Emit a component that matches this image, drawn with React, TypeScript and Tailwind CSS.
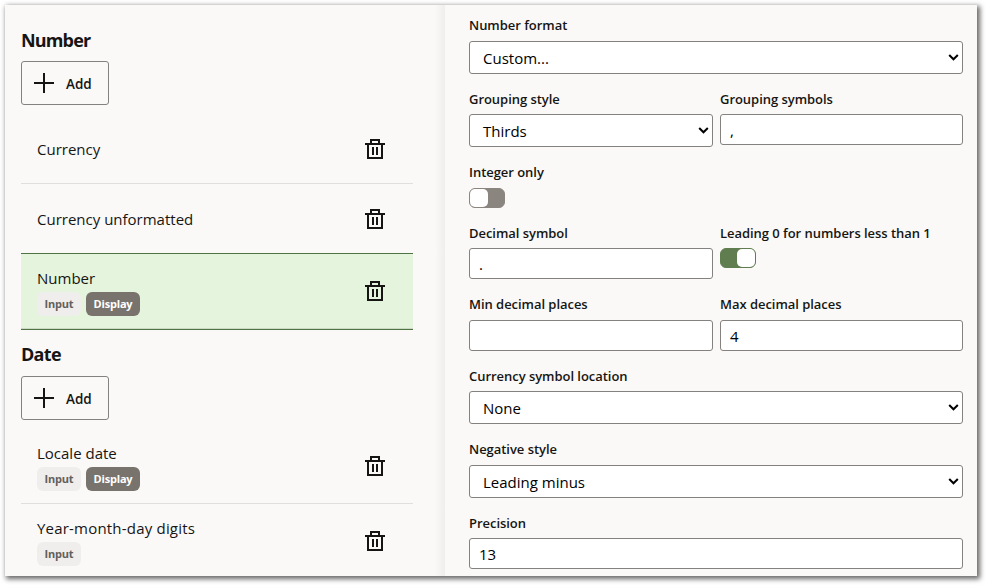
import React from "react";

function TrashIcon() {
  return (
    <svg width="20" height="20" viewBox="0 0 20 20" fill="none" stroke="#161513" strokeWidth="2" shapeRendering="crispEdges">
      <path d="M0 5h20M6 4V1h8v3M3 5v14h14V5M8 8v8M12 8v8" />
    </svg>
  );
}

function AddButton({ className }: { className: string }) {
  return (
    <button className={`flex h-11 w-22 items-center rounded-[3px] border border-[#84817e] pl-3 ${className}`}>
      <svg width="20" height="20" viewBox="0 0 20 20" stroke="#161513" strokeWidth="2" shapeRendering="crispEdges">
        <path d="M0 10h20M10 0v20" />
      </svg>
      <span className="ml-3 mt-0.5 text-[13.5px] leading-5 font-semibold">Add</span>
    </button>
  );
}

function Chip({ display = false }: { display?: boolean }) {
  return display ? (
    <span className="flex h-6 w-[54px] items-center justify-center rounded-md bg-[#79736d] text-[11px] font-bold tracking-[-0.2px] text-white">Display</span>
  ) : (
    <span className="flex h-6 w-11 items-center justify-center rounded-md bg-[#f0eeed] text-[11px] font-bold tracking-[-0.2px] text-[#65605b]">Input</span>
  );
}

function Row({ name, spacing = "", className, chips = 0 }: { name: string; spacing?: string; className: string; chips?: number }) {
  return (
    <div className={`flex items-center pl-4 pr-7 ${className}`}>
      <div className="flex-1">
        <div className={`text-[15px] leading-6 font-normal ${spacing}`}>{name}</div>
        {chips > 0 && (
          <div className="mt-0.5 flex gap-[5px]">
            <Chip />
            {chips > 1 && <Chip display />}
          </div>
        )}
      </div>
      <TrashIcon />
    </div>
  );
}

function Label({ children }: { children: string }) {
  return <label className="block h-5 whitespace-nowrap text-[13px] leading-5 font-semibold tracking-[-0.04px]">{children}</label>;
}

function Select({ value }: { value: string }) {
  return (
    <div className="flex h-[33px] items-center justify-between rounded-[3px] border border-[#84817e] bg-white pl-[13px] pr-[3px] text-[15px] text-black">
      <span className="leading-6 font-normal">{value}</span>
      <svg width="11" height="8" viewBox="0 0 11 8" fill="none" stroke="#000" strokeWidth="2">
        <path d="M1.2 1L5.5 5.3L9.8 1" />
      </svg>
    </div>
  );
}

function Input({ value }: { value: string }) {
  return (
    <div className="flex h-[31px] items-center rounded-[3px] border border-[#84817e] bg-white pl-[9px] text-[15px] text-black">
      <span className="leading-6 font-normal">{value}</span>
    </div>
  );
}

function Toggle({ on = false }: { on?: boolean }) {
  return (
    <div className={`flex h-5 w-9 rounded-md border ${on ? "justify-end border-[#5f7d4f] bg-[#5f7d4f]" : "border-[#8b8580] bg-[#8b8580]"}`}>
      <div className="h-[18px] w-[18px] rounded-[5px] bg-white" />
    </div>
  );
}

export default function App() {
  return (
    <div className="h-[585px] w-[986px] overflow-hidden bg-white pl-[5px] pt-[5px] font-['Open_Sans','Noto_Sans',sans-serif] text-[#161513]">
      <div className="flex h-[571px] w-[972px] bg-[#faf9f7] shadow-[2px_2px_5px_1px_rgba(0,0,0,0.6)]">
        <div className="w-[430px] pl-4">
          <h2 className="pt-[23px] text-[18px] leading-6 font-bold tracking-[-0.85px]">Number</h2>
          <AddButton className="mt-[9px]" />
          <div className="w-[392px] pt-2.5">
            <Row name="Currency" className="h-[69px] border-b border-[#e1dfdd]" />
            <Row name="Currency unformatted" className="h-[69px]" />
            <Row
              name="Number"
              className="h-[77px] border-y border-[#4f7342] bg-[#e4f4dd] pb-px shadow-[inset_0_-1px_0_#cbd9c5]"
              chips={2}
            />
          </div>
          <h2 className="pt-3 text-[18px] leading-6 font-bold tracking-[-0.7px]">Date</h2>
          <AddButton className="mt-2.5" />
          <div className="w-[392px] pt-[9px]">
            <Row name="Locale date" className="h-[75px] border-b border-[#e1dfdd]" chips={2} />
            <Row name="Year-month-day digits" spacing="tracking-[0.2px]" className="h-[74px]" chips={1} />
          </div>
        </div>
        <div className="w-2.5 bg-linear-to-r from-[#faf9f7] to-[#efeeec]" />
        <div className="flex-1 pl-6 pr-3.5 pt-2.5">
          <Label>Number format</Label>
          <div className="mt-1.5"><Select value="Custom..." /></div>
          <div className="mt-[15px] grid grid-cols-[244px_243px] gap-x-[7px]">
            <div><Label>Grouping style</Label><div className="mt-[5px]"><Select value="Thirds" /></div></div>
            <div><Label>Grouping symbols</Label><div className="mt-[5px]"><Input value="," /></div></div>
          </div>
          <div className="mt-[15px]"><Label>Integer only</Label></div>
          <div className="mt-1.5"><Toggle /></div>
          <div className="mt-[15px] grid grid-cols-[244px_243px] gap-x-[7px]">
            <div><Label>Decimal symbol</Label><div className="mt-[5px]"><Input value="." /></div></div>
            <div><Label>Leading 0 for numbers less than 1</Label><div className="mt-[5px]"><Toggle on /></div></div>
          </div>
          <div className="mt-[15px] grid grid-cols-[244px_243px] gap-x-[7px]">
            <div><Label>Min decimal places</Label><div className="mt-1.5"><Input value="" /></div></div>
            <div><Label>Max decimal places</Label><div className="mt-1.5"><Input value="4" /></div></div>
          </div>
          <div className="mt-[15px]"><Label>Currency symbol location</Label></div>
          <div className="mt-[5px]"><Select value="None" /></div>
          <div className="mt-[15px]"><Label>Negative style</Label></div>
          <div className="mt-1.5"><Select value="Leading minus" /></div>
          <div className="mt-[15px]"><Label>Precision</Label></div>
          <div className="mt-[5px]"><Input value="13" /></div>
        </div>
      </div>
    </div>
  );
}
